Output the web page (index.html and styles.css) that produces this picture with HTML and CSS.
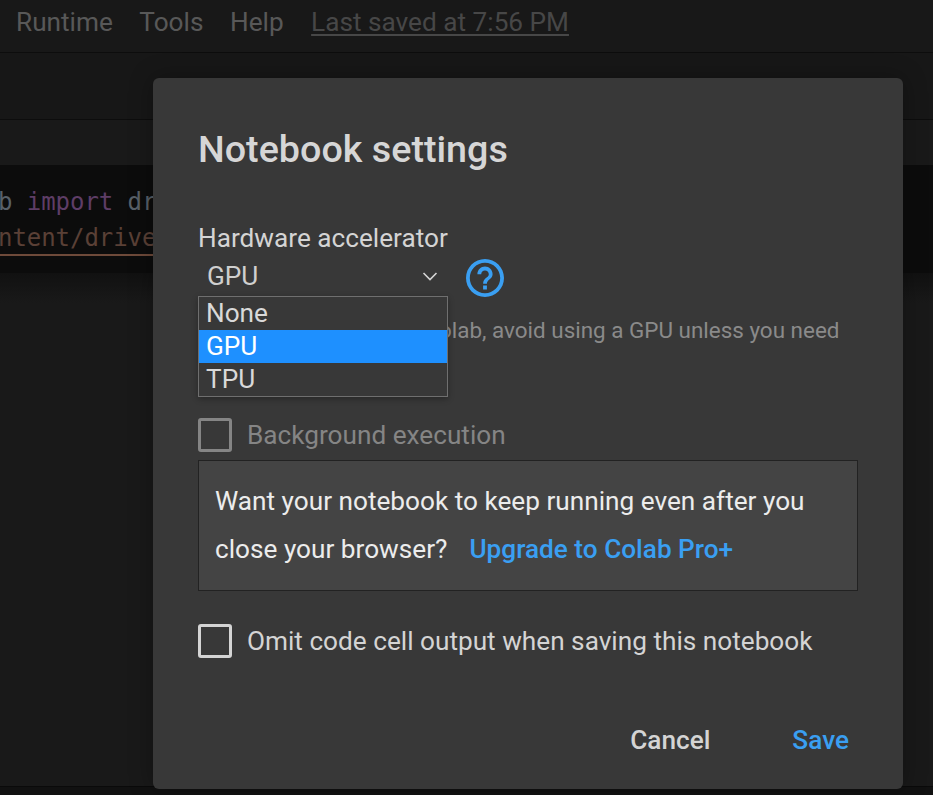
FILE: index.html
```html
<!DOCTYPE html>
<html lang="en">
<head>
<meta charset="utf-8">
<title>Notebook settings</title>
<link rel="stylesheet" href="styles.css">
</head>
<body>
<div class="page">
  <nav class="menubar">
    <span class="menu-item">Runtime</span>
    <span class="menu-item">Tools</span>
    <span class="menu-item">Help</span>
    <span class="saved">Last saved at 7:56 PM</span>
  </nav>
  <div class="toolbar"></div>
  <div class="gap"></div>
  <div class="code">
    <div class="code-line">b <span class="kw">import</span> drive</div>
    <div class="code-line"><span class="path">ntent/drive</span></div>
  </div>
  <div class="rest"></div>
  <div class="footer"></div>
</div>
<div class="dialog">
  <h1 class="title">Notebook settings</h1>
  <div class="label">Hardware accelerator</div>
  <div class="select-row">
    <div class="select">
      <span>GPU</span>
      <svg class="chev" width="16" height="9" viewBox="0 0 16 9"><path d="M1.5 1 8 7.5 14.5 1" fill="none" stroke="#d4d4d4" stroke-width="1.6"/></svg>
    </div>
    <svg class="help" width="38" height="38" viewBox="2 2 20 20"><path fill="#3a9ff2" d="M11 18h2v-2h-2v2zm1-16C6.48 2 2 6.48 2 12s4.48 10 10 10 10-4.48 10-10S17.52 2 12 2zm0 18c-4.41 0-8-3.59-8-8s3.59-8 8-8 8 3.59 8 8-3.59 8-8 8zm0-14c-2.21 0-4 1.79-4 4h2c0-1.1.9-2 2-2s2 .9 2 2c0 2-3 1.75-3 5h2c0-2.25 3-2.5 3-5 0-2.21-1.79-4-4-4z"/></svg>
    <ul class="options">
      <li class="option">None</li>
      <li class="option selected">GPU</li>
      <li class="option">TPU</li>
    </ul>
  </div>
  <p class="hint">To get the most out of Colab, avoid using a GPU unless you need</p>
  <label class="check disabled"><span class="box"></span>Background execution</label>
  <div class="promo">
    <div>Want your notebook to keep running even after you</div>
    <div>close your browser?<a class="upgrade">Upgrade to Colab Pro+</a></div>
  </div>
  <label class="check omit"><span class="box"></span>Omit code cell output when saving this notebook</label>
  <div class="actions">
    <button class="btn">Cancel</button>
    <button class="btn primary">Save</button>
  </div>
</div>
</body>
</html>
```
FILE: styles.css
```css
* { box-sizing: border-box; }
html, body { margin: 0; height: 100%; overflow: hidden; background: #181818; }
body { font-family: Roboto, "Liberation Sans", sans-serif; }
.page { height: 795px; display: flex; flex-direction: column; }
.menubar { height: 53px; flex: none; display: flex; align-items: center; gap: 26.5px; padding: 0 0 9px 16px; border-bottom: 1px solid #0d0d0d; background: #181818; color: #585858; font-size: 26.2px; }
.saved { margin-left: 1px; color: #474747; text-decoration: underline; text-underline-offset: 3px; }
.toolbar { height: 67px; flex: none; border-bottom: 1px solid #0d0d0d; background: #171717; }
.gap { height: 45px; flex: none; background: #191919; }
.code { height: 108px; flex: none; padding-top: 19px; background: #0c0c0c; font-family: "DejaVu Sans Mono", monospace; font-size: 24px; line-height: 36px; color: #586068; white-space: nowrap; overflow: hidden; }
.code-line { margin-left: -2px; letter-spacing: -0.05px; }
.kw { color: #5e3d66; }
.path { padding-bottom: 2px; color: #5a4036; border-bottom: 2px solid #6e4a3a; }
.rest { flex: 1; background: linear-gradient(#111, #191919 30px); }
.footer { height: 9px; flex: none; border-top: 1px solid #0a0a0a; background: #111; }
.dialog { position: absolute; left: 153px; top: 78px; width: 750px; height: 711px; padding: 0 45px; background: #383838; border-radius: 6px; box-shadow: 0 0 24px rgba(0,0,0,.3); color: #d4d4d4; }
.title { margin: 46px 0 0; font-size: 37.7px; line-height: 50px; font-weight: 500; color: #d6d6d6; }
.label { margin-top: 50px; font-size: 26.2px; line-height: 28px; color: #d4d4d4; }
.select-row { position: relative; display: flex; align-items: center; gap: 18px; margin-top: 5px; height: 38px; }
.select { width: 250px; height: 30px; display: flex; align-items: center; justify-content: space-between; padding: 0 9px; font-size: 26.2px; color: #cfcfcf; }
.chev { margin-right: 1px; }
.help { margin-top: 3px; }
.options { position: absolute; left: 0; top: 39px; width: 250px; margin: 0; padding: 0; list-style: none; background: #383838; border: 1px solid #6f6f6f; box-shadow: 0 2px 6px rgba(0,0,0,.3); font-size: 26.2px; color: #d9d9d9; z-index: 2; }
.option { height: 33px; line-height: 33px; padding-left: 7px; }
.selected { background: #1e90ff; color: #fff; }
.hint { margin: 19px 0 0; font-size: 22.45px; line-height: 33px; height: 66px; color: #8a8a8a; white-space: nowrap; }
.check { display: flex; align-items: center; gap: 15px; font-size: 26.2px; color: #d4d4d4; }
.box { width: 34px; height: 34px; flex: none; border: 3px solid #d4d4d4; border-radius: 3px; }
.disabled { margin-top: 38px; color: #858585; }
.disabled .box { border-color: #858585; }
.promo { margin-top: 8px; width: 660px; height: 131px; padding: 16px 16px 0; background: #444; border: 1px solid #222; font-size: 26.2px; line-height: 48px; color: #ececec; }
.upgrade { margin-left: 22px; color: #3a9ff2; font-weight: 500; }
.omit { margin-top: 33px; }
.actions { display: flex; justify-content: flex-end; gap: 82px; margin-top: 67px; padding-right: 9px; }
.btn { padding: 0; border: 0; background: none; font: 500 26.2px/30px Roboto, sans-serif; color: #d4d4d4; }
.primary { color: #3a9ff2; }
```
